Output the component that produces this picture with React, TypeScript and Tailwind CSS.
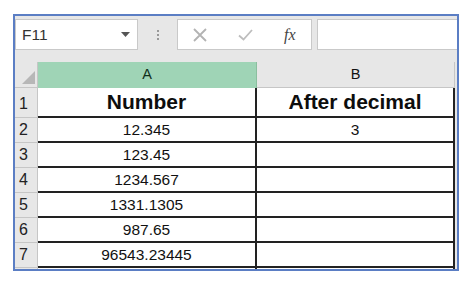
import React from 'react'

const rows = [
  { n: '2', a: '12.345', b: '3' },
  { n: '3', a: '123.45', b: '' },
  { n: '4', a: '1234.567', b: '' },
  { n: '5', a: '1331.1305', b: '' },
  { n: '6', a: '987.65', b: '' },
  { n: '7', a: '96543.23445', b: '' },
]

const font = { fontFamily: '"Liberation Sans", Arial, sans-serif' }

export default function App() {
  return (
    <div className="w-[474px] h-[286px] bg-white pt-[14px] pl-[13px]" style={font}>
      <div className="w-[446px] h-[257px] border-2 border-[#5b7ec4] bg-[#e7e7e7] flex flex-col overflow-hidden">
        {/* formula bar */}
        <div className="h-[46px] flex items-start pt-[3px] shrink-0">
          <div className="w-[123px] h-[31px] bg-white border border-[#c9c9c9] flex items-center justify-between pl-[6px] pr-[7px]">
            <span className="text-[15.5px] text-[#333] pt-[1px]">F11</span>
            <svg width="9" height="5" viewBox="0 0 9 5">
              <path d="M0 0h9L4.5 5z" fill="#555" />
            </svg>
          </div>
          <div className="w-[39px] h-[31px] flex flex-col items-center justify-center gap-[2px]">
            <span className="w-[2px] h-[2px] bg-[#999]" />
            <span className="w-[2px] h-[2px] bg-[#999]" />
            <span className="w-[2px] h-[2px] bg-[#999]" />
          </div>
          <div className="w-[135px] h-[31px] bg-white border border-[#c9c9c9] flex items-center">
            <svg width="14" height="14" viewBox="0 0 14 14" className="ml-[15px]">
              <path d="M1 1l12 12M13 1L1 13" stroke="#b3b3b3" strokeWidth="1.8" />
            </svg>
            <svg width="15" height="12" viewBox="0 0 15 12" className="ml-[31px]">
              <path d="M1 6.5l4.5 4L14 1" stroke="#bdbdbd" strokeWidth="1.8" fill="none" />
            </svg>
            <span
              className="ml-[31px] text-[16px] italic text-[#444]"
              style={{ fontFamily: '"Liberation Serif", "Times New Roman", serif' }}
            >
              fx
            </span>
          </div>
          <div className="ml-[5px] flex-1 h-[31px] bg-white border border-[#c9c9c9] border-r-0" />
        </div>

        {/* column headers */}
        <div className="h-[26px] flex shrink-0">
          <div className="w-[23px] border-r border-b border-[#c6c6c6] flex items-end justify-end pr-[2px] pb-[3px]">
            <svg width="13" height="13" viewBox="0 0 13 13">
              <path d="M13 0V13H0z" fill="#b7b7b7" />
            </svg>
          </div>
          <div className="w-[219px] bg-[#9fd4b6] border-r border-[#8bbf9f] flex items-center justify-center text-[14.5px] text-[#12301c]">
            A
          </div>
          <div className="w-[198px] border-r border-b border-[#c6c6c6] flex items-center justify-center text-[14.5px] text-[#111]">
            B
          </div>
          <div className="flex-1" />
        </div>

        {/* row 1 */}
        <div className="h-[30px] flex shrink-0">
          <div className="w-[23px] border-r border-b border-[#c6c6c6] flex items-end pl-[4px] pb-[1px] text-[16px] text-[#222]">
            1
          </div>
          <div className="w-[219px] bg-white border-r-2 border-b-2 border-[#222] flex items-center justify-center text-[21px] font-bold text-[#0d0d0d]">
            Number
          </div>
          <div className="w-[198px] bg-white border-r-2 border-b-2 border-[#222] flex items-center justify-center text-[21px] font-bold text-[#0d0d0d]">
            After decimal
          </div>
          <div className="flex-1" />
        </div>

        {rows.map((r) => (
          <div key={r.n} className="h-[25px] flex shrink-0">
            <div className="w-[23px] border-r border-b border-[#c6c6c6] flex items-center pl-[4px] text-[16px] text-[#222]">
              {r.n}
            </div>
            <div className="w-[219px] bg-white border-r-2 border-b-2 border-[#222] flex items-center justify-center text-[15.5px] text-[#111]">
              {r.a}
            </div>
            <div className="w-[198px] bg-white border-r-2 border-b-2 border-[#222] flex items-center justify-center text-[15.5px] text-[#111]">
              {r.b}
            </div>
            <div className="flex-1" />
          </div>
        ))}

        <div className="flex-1 flex">
          <div className="w-[23px] border-r border-[#c6c6c6]" />
          <div className="w-[219px] bg-white border-r-2 border-[#222]" />
          <div className="w-[198px] bg-white border-r-2 border-[#222]" />
        </div>
      </div>
    </div>
  )
}
